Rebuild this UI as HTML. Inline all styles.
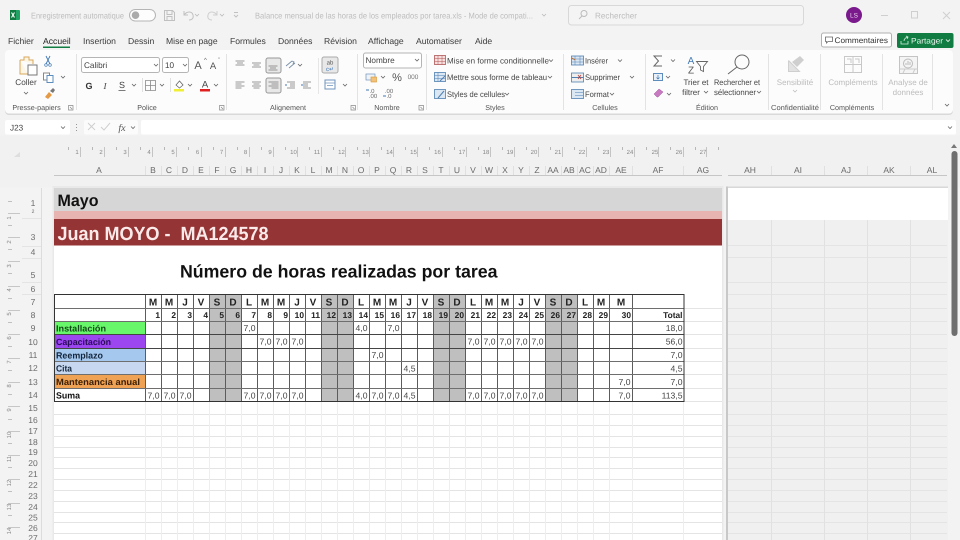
<!DOCTYPE html>
<html lang="fr"><head><meta charset="utf-8"><title>Excel</title>
<style>
html,body{margin:0;padding:0;width:960px;height:540px;overflow:hidden;background:#f3f3f3}
svg{display:block;font-family:"Liberation Sans",sans-serif;text-rendering:geometricPrecision;filter:blur(.3px)}
.t{font-size:8.3px;fill:#bdbdbd}
.m{font-size:8.6px;fill:#3a3a3a}
.r{font-size:8px;fill:#444}
.g{font-size:7.2px;fill:#555;text-anchor:middle}
.d{font-size:8px;fill:#bcbcbc;text-anchor:middle}
.ch{fill:none;stroke:#666;stroke-width:.8}
.rl{font-size:6px;fill:#888;text-anchor:middle}
.ch2{font-size:8.5px;fill:#6a6a6a;text-anchor:middle}
.rh{font-size:8.5px;fill:#6a6a6a;text-anchor:middle}
.h{font-size:10px;font-weight:bold;fill:#222;text-anchor:middle}
.n{font-size:8.4px;font-weight:bold;fill:#222;text-anchor:end}
.v{font-size:8.6px;fill:#444;text-anchor:end}
.l{font-size:9px;font-weight:bold}
</style></head><body>
<svg width="960" height="540" viewBox="0 0 960 540" xmlns="http://www.w3.org/2000/svg">
<defs><path id="c" class="ch" d="M-2-1 0 1 2-1"/></defs>
<rect width="960" height="540" fill="#f3f3f3"/>

<!-- title bar -->
<rect x="10" y="10" width="10" height="10" rx="1" fill="#21a366"/>
<rect x="10" y="10" width="6" height="10" fill="#107c41"/>
<path d="M11.5 12.5l3 5M14.5 12.5l-3 5" stroke="#fff" stroke-width="1.1"/>
<text class="t" x="31" y="18.5" textLength="93" lengthAdjust="spacingAndGlyphs">Enregistrement automatique</text>
<rect x="129.5" y="9.5" width="26" height="11.5" rx="5.7" fill="#fdfdfd" stroke="#b5b5b5"/>
<circle cx="135.5" cy="15.2" r="3.8" fill="#ababab"/>
<path d="M164.5 10.5h8l2 2v8h-10zM167 10.5v4h5v-4M167 20.5v-4h5v4" fill="none" stroke="#c0c0c0"/>
<path d="M184 11v4h4M184 15c3-4 8-4 9 0s-2 5-4 5" fill="none" stroke="#c0c0c0"/>
<use href="#c" x="197" y="15" opacity=".4"/>
<path d="M217 11v4h-4M217 15c-3-4-8-4-9 0s2 5 4 5" fill="none" stroke="#cfcfcf"/>
<use href="#c" x="222" y="15" opacity=".4"/>
<path d="M234 12.5h4M234 15l2 2 2-2" fill="none" stroke="#c0c0c0"/>
<text class="t" x="255" y="18.5" textLength="278" lengthAdjust="spacingAndGlyphs">Balance mensual de las horas de los empleados por tarea.xls  -  Mode de compati...</text>
<use href="#c" x="544" y="15" opacity=".4"/>
<rect x="568.5" y="5.5" width="235" height="19.5" rx="3" fill="#f4f4f4" stroke="#d8d8d8"/>
<circle cx="584" cy="13.5" r="3" fill="none" stroke="#bbb"/><path d="M582 16l-3 3" stroke="#bbb"/>
<text class="t" x="595" y="18.5" textLength="42" lengthAdjust="spacingAndGlyphs">Rechercher</text>
<circle cx="854" cy="15" r="8" fill="#7a1a8c"/>
<text x="854" y="17.5" font-size="6.5" fill="#e8d0ee" text-anchor="middle">LS</text>
<path d="M881 15.5h7" stroke="#cfcfcf"/>
<rect x="911.5" y="11.5" width="6" height="6.5" fill="none" stroke="#cfcfcf"/>
<path d="M943 12l7 7M950 12l-7 7" stroke="#cfcfcf"/>

<!-- tabs -->
<text class="m" x="8" y="44">Fichier</text>
<text class="m" x="43" y="44" style="fill:#222">Accueil</text>
<rect x="43" y="46.5" width="27" height="1.5" fill="#107c41"/>
<text class="m" x="83" y="44">Insertion</text>
<text class="m" x="128" y="44">Dessin</text>
<text class="m" x="166" y="44">Mise en page</text>
<text class="m" x="230" y="44">Formules</text>
<text class="m" x="278" y="44">Données</text>
<text class="m" x="324" y="44">Révision</text>
<text class="m" x="368" y="44">Affichage</text>
<text class="m" x="416" y="44">Automatiser</text>
<text class="m" x="475" y="44">Aide</text>
<rect x="821.5" y="33" width="70" height="14" rx="2" fill="#fff" stroke="#b0b0b0"/>
<path d="M825.5 37h7v4.5h-4.5l-1.5 1.5v-1.5h-1z" fill="none" stroke="#666" stroke-width=".8"/>
<text class="r" x="834.5" y="43" textLength="53.5" lengthAdjust="spacingAndGlyphs" style="fill:#333">Commentaires</text>
<rect x="897" y="33" width="56.5" height="15" rx="2" fill="#107c41"/>
<path d="M901 41v3h7v-3M904 41c0-2 2-4 4-4M906 36l2 1-1 2" fill="none" stroke="#d8efe2" stroke-width=".8"/>
<text class="r" x="911" y="43.5" textLength="32" lengthAdjust="spacingAndGlyphs" style="fill:#e6f5ec">Partager</text>
<path d="M946 39.5l2 2 2-2" fill="none" stroke="#fff" stroke-width=".8"/>

<!-- ribbon -->
<rect x="5" y="50.5" width="948" height="63.5" rx="4" fill="#d9d9d9" transform="translate(0 1)"/>
<rect x="5" y="50" width="948" height="63.5" rx="4" fill="#fcfcfc"/>
<path d="M76.5 54v56M226.5 54v56M357.5 54v56M426.5 54v56M563.5 54v56M645.5 54v56M768.5 54v56M820.5 54v56M882.5 54v56M932.5 54v56" stroke="#e3e3e3"/>

<!-- clipboard -->
<path d="M20 60h4v-3h5v3h4v4M20 60v14h8" fill="#fdf6e6" stroke="#d9a85b"/>
<rect x="28" y="65" width="9" height="10" fill="#fff" stroke="#777"/>
<text class="r" x="26" y="85" text-anchor="middle" style="font-size:8.2px">Coller</text>
<use href="#c" x="26" y="93"/>
<path d="M46 56l4 8M50 56l-4 8" stroke="#3f78b5" stroke-width=".9"/>
<circle cx="46" cy="65" r="1.3" fill="none" stroke="#3f78b5" stroke-width=".7"/><circle cx="50" cy="65" r="1.3" fill="none" stroke="#3f78b5" stroke-width=".7"/>
<rect x="43.5" y="73" width="6" height="7" fill="#fff" stroke="#888"/><rect x="47" y="75.5" width="6" height="7" fill="#fff" stroke="#5d8dbd"/>
<use href="#c" x="63" y="77"/>
<path d="M45 97l4-5 3 3-4 4z" fill="#e59a45"/><path d="M50 91l3-3 2 2-2 3z" fill="#777"/>
<text class="g" x="36.5" y="110">Presse-papiers</text>
<path d="M68.5 105.5h4.500v4.500h-4.500zM70 107l2 2" fill="none" stroke="#888" stroke-width=".7"/>

<!-- font -->
<rect x="81.5" y="57.5" width="78" height="15" rx="2" fill="#fff" stroke="#b5b5b5"/>
<text class="r" x="84" y="68" style="font-size:8.2px">Calibri</text>
<use href="#c" x="156" y="65"/>
<rect x="162.5" y="57.5" width="26" height="15" rx="2" fill="#fff" stroke="#b5b5b5"/>
<text class="r" x="165" y="68" style="font-size:8.2px">10</text>
<use href="#c" x="185" y="65"/>
<text x="198" y="69" font-size="11" fill="#555" text-anchor="middle">A</text><text x="204" y="62" font-size="6" fill="#555">^</text>
<text x="213" y="69" font-size="9.5" fill="#555" text-anchor="middle">A</text><text x="218" y="62" font-size="6" fill="#555">ˇ</text>
<text x="89" y="89" font-size="9" font-weight="bold" fill="#333" text-anchor="middle">G</text>
<text x="105" y="89" font-size="9" font-style="italic" font-family="Liberation Serif" fill="#444" text-anchor="middle">I</text>
<text x="122" y="88" font-size="9" fill="#444" text-anchor="middle">S</text><path d="M118.5 90.5h7" stroke="#444" stroke-width=".7"/>
<use href="#c" x="134" y="85"/>
<path d="M142.5 78v14M170.5 78v14" stroke="#e0e0e0"/>
<path d="M145.5 80.5h10v10h-10zM150.5 80.5v10M145.5 85.5h10" fill="none" stroke="#888" stroke-width=".8"/>
<use href="#c" x="162" y="85"/>
<path d="M176 85l3.500-4 3.500 4-3.500 3z" fill="#fff" stroke="#666" stroke-width=".8"/><rect x="174" y="89" width="10" height="2.5" fill="#f1ee36"/>
<use href="#c" x="190" y="85"/>
<text x="205" y="87.5" font-size="9.5" fill="#444" text-anchor="middle">A</text><rect x="200" y="89" width="10" height="2.5" fill="#e02020"/>
<use href="#c" x="216" y="85"/>
<text class="g" x="147" y="110">Police</text>
<path d="M219.5 105.5h4.500v4.500h-4.500zM221 107l2 2" fill="none" stroke="#888" stroke-width=".7"/>

<!-- alignment -->
<rect x="266" y="58" width="15" height="15" rx="2" fill="#e8e8e8" stroke="#999"/>
<rect x="266" y="78" width="15" height="15" rx="2" fill="#e8e8e8" stroke="#999"/>
<path d="M235.5 61h9M237 63h6M235.5 65h9M252 63h9M253.5 65h6M252 67h9M268.5 66h9M270 68h6M268.5 70h9" stroke="#777" stroke-width=".8"/>
<path d="M286 66l6-5M289 68l6-5M292 61l2 1-1 2" fill="none" stroke="#7a8ea8" stroke-width=".9"/>
<use href="#c" x="300" y="65"/>
<path d="M235.5 82h9M235.5 84h6M235.5 86h9M235.5 88h6M252 82h9M253.5 84h6M252 86h9M253.5 88h6M268.5 82h10M271.5 84h7M268.5 86h10M271.5 88h7M287 82h8M290 84h5M290 86h5M287 88h8M303 82h8M303 84h5M303 86h5M303 88h8" stroke="#777" stroke-width=".8"/>
<path d="M285 85l2 0M301 85l2 0" stroke="#3f78b5"/>
<path d="M318.5 58v36" stroke="#e6e6e6"/>
<rect x="322" y="57" width="16" height="16" rx="2" fill="#e8e8e8" stroke="#aaa"/>
<text x="330" y="64.5" font-size="6" fill="#555" text-anchor="middle">ab</text><text x="330" y="71" font-size="6" fill="#3f78b5" text-anchor="middle">c↵</text>
<rect x="325" y="80" width="10" height="9" fill="#fff" stroke="#6f93bd"/><path d="M325 83h10M327 85.5h6" stroke="#6f93bd" stroke-width=".7"/>
<use href="#c" x="345" y="85"/>
<text class="g" x="288" y="110">Alignement</text>
<path d="M351 105.5h4.500v4.500h-4.500zM352.5 107l2 2" fill="none" stroke="#888" stroke-width=".7"/>

<!-- number -->
<rect x="363.5" y="53" width="58" height="15" rx="2" fill="#fff" stroke="#b5b5b5"/>
<text class="r" x="365.5" y="63" style="font-size:8.2px">Nombre</text>
<use href="#c" x="417" y="60"/>
<rect x="366" y="74" width="9" height="6" fill="#eef3f8" stroke="#6f93bd" stroke-width=".7"/><rect x="371" y="77" width="5.5" height="5" fill="#f3c27a" stroke="#d9932f" stroke-width=".6"/>
<use href="#c" x="383" y="77"/>
<text x="397" y="81" font-size="11" fill="#555" text-anchor="middle">%</text>
<text x="413" y="79" font-size="6.5" fill="#777" text-anchor="middle">000</text>
<text x="372" y="93" font-size="6" fill="#666" text-anchor="middle">.0</text><text x="373" y="98" font-size="6" fill="#666" text-anchor="middle">.00</text><path d="M366 90h3" stroke="#3f78b5"/>
<text x="389" y="93" font-size="6" fill="#666" text-anchor="middle">.00</text><text x="389" y="98" font-size="6" fill="#666" text-anchor="middle">.0</text><path d="M383 96h3" stroke="#3f78b5"/>
<text class="g" x="387" y="110">Nombre</text>
<path d="M419 105.5h4.500v4.500h-4.500zM420.5 107l2 2" fill="none" stroke="#888" stroke-width=".7"/>

<!-- styles -->
<rect x="434.5" y="55.5" width="11" height="9" fill="#f7dede" stroke="#b05555" stroke-width=".8"/><path d="M434.5 58.5h11M434.5 61.5h11M438 55.5v9M442 55.5v9" stroke="#b05555" stroke-width=".5"/>
<rect x="434.5" y="72.5" width="11" height="9" fill="#dbe7f3" stroke="#4f7fb0" stroke-width=".8"/><path d="M434.5 75.5h11M434.5 78.5h11M438 72.5v9" stroke="#4f7fb0" stroke-width=".5"/><path d="M440 81l5-5" stroke="#4f7fb0"/>
<rect x="434.5" y="89.5" width="11" height="9" fill="#dbe7f3" stroke="#4f7fb0" stroke-width=".8"/><path d="M438 98l6-7" stroke="#4f7fb0"/>
<text class="r" x="447" y="63.5" textLength="102" lengthAdjust="spacingAndGlyphs">Mise en forme conditionnelle</text><use href="#c" x="551" y="60.5"/>
<text class="r" x="447" y="80" textLength="100" lengthAdjust="spacingAndGlyphs">Mettre sous forme de tableau</text><use href="#c" x="550" y="77"/>
<text class="r" x="447" y="97" textLength="58" lengthAdjust="spacingAndGlyphs">Styles de cellules</text><use href="#c" x="507" y="94"/>
<text class="g" x="495" y="110">Styles</text>

<!-- cells -->
<rect x="571.5" y="56" width="12" height="9" fill="#dbe7f3" stroke="#4f7fb0" stroke-width=".8"/><path d="M571.5 59h12M571.5 62h12M575 56v9M580 56v9" stroke="#4f7fb0" stroke-width=".5"/><path d="M572 58l3 2" stroke="#c06a2a"/>
<rect x="571.5" y="73" width="12" height="9" fill="#eee" stroke="#4f7fb0" stroke-width=".8"/><path d="M571.5 77.5h12" stroke="#4f7fb0"/><path d="M578 75l3 4M581 75l-3 4" stroke="#c04040" stroke-width=".8"/>
<rect x="571.5" y="89.5" width="12" height="9" fill="#dbe7f3" stroke="#4f7fb0" stroke-width=".8"/><path d="M575 92.5h8M575 95.5h8" stroke="#4f7fb0" stroke-width=".6"/>
<text class="r" x="585" y="63.5" textLength="23" lengthAdjust="spacingAndGlyphs">Insérer</text><use href="#c" x="620" y="60.5"/>
<text class="r" x="585" y="80" textLength="35" lengthAdjust="spacingAndGlyphs">Supprimer</text><use href="#c" x="632" y="77"/>
<text class="r" x="585" y="97" textLength="24" lengthAdjust="spacingAndGlyphs">Format</text><use href="#c" x="612" y="94"/>
<text class="g" x="605" y="110">Cellules</text>

<!-- edit -->
<path d="M662 56h-8l4.500 5-4.500 5h8" fill="none" stroke="#666"/>
<use href="#c" x="673" y="60.5"/>
<rect x="653.5" y="73.5" width="9" height="7" fill="#e9f0f7" stroke="#5d8dbd"/><path d="M658 75v4M656.5 77.5l1.500 1.500 1.500-1.500" fill="none" stroke="#3f78b5" stroke-width=".7"/>
<use href="#c" x="668" y="77"/>
<path d="M654 94l5-5 4 3-5 5h-1z" fill="#c77ac0" stroke="#a355a0" stroke-width=".5"/>
<use href="#c" x="669" y="94"/>
<text x="691" y="64" font-size="10" fill="#3f78b5" text-anchor="middle">A</text><text x="691" y="73.5" font-size="10" fill="#555" text-anchor="middle">Z</text>
<path d="M696.5 61.5h11l-4 5v5l-3-1.500v-3.500z" fill="none" stroke="#666" stroke-width=".9"/>
<text class="r" x="696" y="85" text-anchor="middle">Trier et</text>
<text class="r" x="691" y="95" text-anchor="middle">filtrer</text><use href="#c" x="706" y="92"/>
<circle cx="742" cy="62" r="7" fill="none" stroke="#666"/><path d="M737 67l-9 7" stroke="#666"/>
<text class="r" x="737" y="85" text-anchor="middle" textLength="46" lengthAdjust="spacingAndGlyphs">Rechercher et</text>
<text class="r" x="735" y="95" text-anchor="middle" textLength="42" lengthAdjust="spacingAndGlyphs">sélectionner</text><use href="#c" x="759" y="92"/>
<text class="g" x="707" y="110">Édition</text>

<!-- confidentiality, add-ins, analysis -->
<path d="M788.5 60.5v11h11l-11-11" fill="#e2e2e2" stroke="#cfcfcf"/>
<path d="M792 62l8-6 4 4-7 7z" fill="#cfcfcf"/>
<text class="d" x="795" y="85">Sensibilité</text>
<use href="#c" x="795" y="91" opacity=".4"/>
<text class="g" x="795" y="110" textLength="48" lengthAdjust="spacingAndGlyphs">Confidentialité</text>
<path d="M844.5 56.5h17v16h-17zM853 56.5v16M844.5 64.5h17M847 59h4v4M855 59h4v4" fill="none" stroke="#c8c8c8"/>
<text class="d" x="853" y="85">Compléments</text>
<text class="g" x="852" y="110">Compléments</text>
<rect x="899.5" y="56.5" width="18" height="17" fill="#f4f4f4" stroke="#c4c4c4"/><circle cx="908" cy="63.5" r="4.5" fill="none" stroke="#bbb"/><path d="M906 65v-2M908 65v-4M910 65v-3" stroke="#bbb"/><path d="M899.5 69h18M903 73l2-4M913 73l2-4" stroke="#ccc"/>
<text class="d" x="908" y="85">Analyse de</text>
<text class="d" x="908" y="95">données</text>
<use href="#c" x="947" y="105"/>

<!-- formula bar -->
<rect x="5" y="120" width="65" height="14.5" rx="2" fill="#fff"/>
<text class="r" x="10" y="130.5" style="font-size:8.2px">J23</text>
<use href="#c" x="63" y="127.5"/>
<path d="M76.5 124v.8M76.5 127v.8M76.5 130v.8" stroke="#777"/>
<rect x="84" y="120" width="54" height="14.5" rx="2" fill="#fbfbfb"/>
<path d="M88 123l7 7M95 123l-7 7M101 127l3 3 6-7" fill="none" stroke="#cfcfcf"/>
<text x="122" y="131" font-size="10" font-style="italic" font-family="Liberation Serif" fill="#555" text-anchor="middle">fx</text>
<use href="#c" x="133" y="127.5"/>
<rect x="141" y="120" width="815" height="14.5" rx="2" fill="#fff"/>
<use href="#c" x="950" y="127.5"/>

<!-- ruler -->
<rect x="0" y="135.5" width="960" height="52" fill="#f1f1f1"/>
<path d="M14 157l6-5v5z" fill="#dedede"/>
<text class="rl" x="77" y="154">1</text><text class="rl" x="101" y="154">2</text><text class="rl" x="125" y="154">3</text><text class="rl" x="149" y="154">4</text><text class="rl" x="173" y="154">5</text><text class="rl" x="197.5" y="154">6</text><text class="rl" x="221.5" y="154">7</text><text class="rl" x="245.5" y="154">8</text><text class="rl" x="270" y="154">9</text><text class="rl" x="293.5" y="154">10</text><text class="rl" x="317" y="154">11</text><text class="rl" x="341.5" y="154">12</text><text class="rl" x="365.5" y="154">13</text><text class="rl" x="389.5" y="154">14</text><text class="rl" x="413.5" y="154">15</text><text class="rl" x="437.5" y="154">16</text><text class="rl" x="462" y="154">17</text><text class="rl" x="486" y="154">18</text><text class="rl" x="510" y="154">19</text><text class="rl" x="534" y="154">20</text><text class="rl" x="558" y="154">21</text><text class="rl" x="582" y="154">22</text><text class="rl" x="606" y="154">23</text><text class="rl" x="630" y="154">24</text><text class="rl" x="655" y="154">25</text><text class="rl" x="679" y="154">26</text><text class="rl" x="703" y="154">27</text>
<path d="M80.5 147v10M104.5 147v10M128.5 147v10M152.5 147v10M176.5 147v10M201.5 147v10M225.5 147v10M249.5 147v10M273.5 147v10M297.5 147v10M321.5 147v10M345.5 147v10M369.5 147v10M393.5 147v10M417.5 147v10M442.5 147v10M466.5 147v10M490.5 147v10M514.5 147v10M538.5 147v10M562.5 147v10M586.5 147v10M610.5 147v10M634.5 147v10M658.5 147v10M683.5 147v10M706.5 147v10" stroke="#b8b8b8" stroke-width=".8"/>
<path d="M68.5 147v3M92.5 147v3M116.5 147v3M140.5 147v3M164.5 147v3M188.5 147v3M213.5 147v3M237.5 147v3M261.5 147v3M285.5 147v3M309.5 147v3M333.5 147v3M357.5 147v3M381.5 147v3M405.5 147v3M429.5 147v3M454.5 147v3M478.5 147v3M502.5 147v3M526.5 147v3M550.5 147v3M574.5 147v3M598.5 147v3M622.5 147v3M646.5 147v3M670.5 147v3M695.5 147v3M718.5 147v3" stroke="#a8a8a8" stroke-width=".8"/>

<!-- column headers -->
<path d="M54 175.5h668M728 175.5h219" stroke="#c6c6c6"/>
<path d="M145.500 166v9M161.500 166v9M177.500 166v9M193.500 166v9M209.500 166v9M225.500 166v9M241.500 166v9M257.500 166v9M273.500 166v9M289.500 166v9M305.500 166v9M321.500 166v9M337.500 166v9M353.500 166v9M369.500 166v9M385.500 166v9M401.500 166v9M417.500 166v9M433.500 166v9M449.500 166v9M465.500 166v9M481.500 166v9M497.500 166v9M513.500 166v9M529.500 166v9M545.500 166v9M561.500 166v9M577.500 166v9M593.500 166v9M609.500 166v9M632.500 166v9M683.500 166v9M771.500 166v9M824.500 166v9M867.500 166v9M910.500 166v9" stroke="#e0e0e0"/>
<text class="ch2" x="99" y="173">A</text><text class="ch2" x="153" y="173">B</text><text class="ch2" x="169" y="173">C</text><text class="ch2" x="185" y="173">D</text><text class="ch2" x="201" y="173">E</text><text class="ch2" x="217" y="173">F</text><text class="ch2" x="233" y="173">G</text><text class="ch2" x="249" y="173">H</text><text class="ch2" x="265" y="173">I</text><text class="ch2" x="281" y="173">J</text><text class="ch2" x="297" y="173">K</text><text class="ch2" x="313" y="173">L</text><text class="ch2" x="329" y="173">M</text><text class="ch2" x="345" y="173">N</text><text class="ch2" x="361" y="173">O</text><text class="ch2" x="377" y="173">P</text><text class="ch2" x="393" y="173">Q</text><text class="ch2" x="409" y="173">R</text><text class="ch2" x="425" y="173">S</text><text class="ch2" x="441" y="173">T</text><text class="ch2" x="457" y="173">U</text><text class="ch2" x="473" y="173">V</text><text class="ch2" x="489" y="173">W</text><text class="ch2" x="505" y="173">X</text><text class="ch2" x="521" y="173">Y</text><text class="ch2" x="537" y="173">Z</text><text class="ch2" x="553" y="173">AA</text><text class="ch2" x="569" y="173">AB</text><text class="ch2" x="585" y="173">AC</text><text class="ch2" x="601" y="173">AD</text><text class="ch2" x="621" y="173">AE</text><text class="ch2" x="658" y="173">AF</text><text class="ch2" x="703" y="173">AG</text><text class="ch2" x="750" y="173">AH</text><text class="ch2" x="798" y="173">AI</text><text class="ch2" x="846" y="173">AJ</text><text class="ch2" x="889" y="173">AK</text><text class="ch2" x="932" y="173">AL</text>

<!-- vertical ruler and row headers -->
<path d="M41.5 188v352" stroke="#dcdcdc"/>
<path d="M8 213.5h12M8 237.5h12M8 261.5h12M8 286.5h12M8 310.5h12M8 334.5h12M8 358.5h12M8 382.5h12M8 406.5h12M8 431.5h12M8 455.5h12M8 479.5h12M8 503.5h12M8 527.5h12" stroke="#b8b8b8" stroke-width=".8"/>
<path d="M8 201.5h4M8 225.5h4M8 249.5h4M8 273.5h4M8 298.5h4M8 322.5h4M8 346.5h4M8 370.5h4M8 394.5h4M8 419.5h4M8 443.5h4M8 467.5h4M8 491.5h4M8 515.5h4" stroke="#b0b0b0" stroke-width=".8"/>
<text class="rl" transform="translate(11 218) rotate(-90)">1</text><text class="rl" transform="translate(11 242) rotate(-90)">2</text><text class="rl" transform="translate(11 266) rotate(-90)">3</text><text class="rl" transform="translate(11 290) rotate(-90)">4</text><text class="rl" transform="translate(11 314) rotate(-90)">5</text><text class="rl" transform="translate(11 338) rotate(-90)">6</text><text class="rl" transform="translate(11 362) rotate(-90)">7</text><text class="rl" transform="translate(11 386) rotate(-90)">8</text><text class="rl" transform="translate(11 410) rotate(-90)">9</text><text class="rl" transform="translate(11 435) rotate(-90)">10</text><text class="rl" transform="translate(11 459) rotate(-90)">11</text><text class="rl" transform="translate(11 483) rotate(-90)">12</text><text class="rl" transform="translate(11 507) rotate(-90)">13</text><text class="rl" transform="translate(11 531) rotate(-90)">14</text>
<path d="M22 218.5h19M22 246.5h19M22 258.5h19M22 282.5h19M22 294.5h19" stroke="#e4e4e4"/>
<text class="rh" x="33" y="206">1</text><text class="rh" x="33" y="213" style="font-size:5px">2</text><text class="rh" x="33" y="240">3</text><text class="rh" x="33" y="255">4</text><text class="rh" x="33" y="278">5</text><text class="rh" x="33" y="292">6</text><text class="rh" x="33" y="305">7</text><text class="rh" x="33" y="318">8</text><text class="rh" x="33" y="331">9</text><text class="rh" x="33" y="345">10</text><text class="rh" x="33" y="358">11</text><text class="rh" x="33" y="371">12</text><text class="rh" x="33" y="385">13</text><text class="rh" x="33" y="398">14</text><text class="rh" x="33" y="411">15</text><text class="rh" x="33" y="423">16</text><text class="rh" x="33" y="434">17</text><text class="rh" x="33" y="445">18</text><text class="rh" x="33" y="455">19</text><text class="rh" x="33" y="466">20</text><text class="rh" x="33" y="477">21</text><text class="rh" x="33" y="488">22</text><text class="rh" x="33" y="499">23</text><text class="rh" x="33" y="510">24</text><text class="rh" x="33" y="520.5">25</text><text class="rh" x="33" y="531">26</text><text class="rh" x="33" y="541">27</text>

<!-- page 1 -->
<rect x="52.5" y="186" width="671" height="354" fill="#e9e9e9"/>
<rect x="54" y="188" width="668" height="352" fill="#fff"/>
<rect x="54" y="188" width="668" height="23" fill="#d6d6d6"/>
<rect x="54" y="211" width="668" height="8" fill="#e8b4b2"/>
<rect x="54" y="219" width="668" height="26.5" fill="#943434"/>
<text x="57.5" y="206" font-size="16.5" font-weight="bold" fill="#111" textLength="41" lengthAdjust="spacingAndGlyphs">Mayo</text>
<text x="57.5" y="240" font-size="19" font-weight="bold" fill="#fbeaea" textLength="211" lengthAdjust="spacingAndGlyphs" xml:space="preserve">Juan MOYO -  MA124578</text>
<text x="180" y="277.5" font-size="18" font-weight="bold" fill="#111" textLength="317.5" lengthAdjust="spacingAndGlyphs">Número de horas realizadas por tarea</text>

<!-- gridlines below table -->
<path d="M54 414.5h668M54 425.5h668M54 436.5h668M54 447.5h668M54 457.5h668M54 468.5h668M54 479.5h668M54 490.5h668M54 501.5h668M54 512.5h668M54 522.5h668M54 533.5h668M684 308.5h38M684 321.5h38M684 334.5h38M684 348.5h38M684 361.5h38M684 374.5h38M684 388.5h38M684 401.5h38" stroke="#e4e4e4"/>
<path d="M145.500 402v138M161.500 402v138M177.500 402v138M193.500 402v138M209.500 402v138M225.500 402v138M241.500 402v138M257.500 402v138M273.500 402v138M289.500 402v138M305.500 402v138M321.500 402v138M337.500 402v138M353.500 402v138M369.500 402v138M385.500 402v138M401.500 402v138M417.500 402v138M433.500 402v138M449.500 402v138M465.500 402v138M481.500 402v138M497.500 402v138M513.500 402v138M529.500 402v138M545.500 402v138M561.500 402v138M577.500 402v138M593.500 402v138M609.500 402v138M632.500 402v138M683.500 402v138" stroke="#eeeeee"/>

<!-- table fills -->
<rect x="54" y="321" width="91" height="13.5" fill="#68f76a"/>
<rect x="54" y="334.5" width="91" height="13.5" fill="#9c46f0"/>
<rect x="54" y="348" width="91" height="13.5" fill="#a5c8ef"/>
<rect x="54" y="361.5" width="91" height="13" fill="#c6d7ef"/>
<rect x="54" y="374.5" width="91" height="13.5" fill="#f0a254"/>
<path d="M209 294h32v108h-32zM321 294h32v108h-32zM433 294h32v108h-32zM545 294h32v108h-32z" fill="#bfbfbf"/>

<!-- table lines -->
<path d="M145.500 294v108M161.500 294v108M177.500 294v108M193.500 294v108M209.500 294v108M225.500 294v108M241.500 294v108M257.500 294v108M273.500 294v108M289.500 294v108M305.500 294v108M321.500 294v108M337.500 294v108M353.500 294v108M369.500 294v108M385.500 294v108M401.500 294v108M417.500 294v108M433.500 294v108M449.500 294v108M465.500 294v108M481.500 294v108M497.500 294v108M513.500 294v108M529.500 294v108M545.500 294v108M561.500 294v108M577.500 294v108M593.500 294v108M609.500 294v108M632.500 294v108" stroke="#5c5c5c" fill="none"/>
<path d="M54 308.5h630M54 321.5h630M54 361.5h630M54 374.5h630M54 388.5h630" stroke="#6e6e6e"/>
<path d="M54 334.5h630M54 348.5h630" stroke="#444"/>
<rect x="54.5" y="294.5" width="629.5" height="107" fill="none" stroke="#333"/>

<!-- labels -->
<text class="l" x="56" y="331.5" fill="#124a1a" textLength="50" lengthAdjust="spacingAndGlyphs">Installación</text>
<text class="l" x="56" y="345" fill="#2c0c5c" textLength="55" lengthAdjust="spacingAndGlyphs">Capacitación</text>
<text class="l" x="56" y="358.5" fill="#14263c" textLength="47" lengthAdjust="spacingAndGlyphs">Reemplazo</text>
<text class="l" x="56" y="371.5" fill="#14263c" textLength="16" lengthAdjust="spacingAndGlyphs">Cita</text>
<text class="l" x="56" y="385" fill="#3a2008" textLength="84" lengthAdjust="spacingAndGlyphs">Mantenancia anual</text>
<text class="l" x="56" y="398.5" fill="#111" textLength="24" lengthAdjust="spacingAndGlyphs">Suma</text>

<!-- day letters -->
<text class="h" x="153" y="305.5">M</text><text class="h" x="169" y="305.5">M</text><text class="h" x="185" y="305.5">J</text><text class="h" x="201" y="305.5">V</text><text class="h" x="217" y="305.5">S</text><text class="h" x="233" y="305.5">D</text><text class="h" x="249" y="305.5">L</text><text class="h" x="265" y="305.5">M</text><text class="h" x="281" y="305.5">M</text><text class="h" x="297" y="305.5">J</text><text class="h" x="313" y="305.5">V</text><text class="h" x="329" y="305.5">S</text><text class="h" x="345" y="305.5">D</text><text class="h" x="361" y="305.5">L</text><text class="h" x="377" y="305.5">M</text><text class="h" x="393" y="305.5">M</text><text class="h" x="409" y="305.5">J</text><text class="h" x="425" y="305.5">V</text><text class="h" x="441" y="305.5">S</text><text class="h" x="457" y="305.5">D</text><text class="h" x="473" y="305.5">L</text><text class="h" x="489" y="305.5">M</text><text class="h" x="505" y="305.5">M</text><text class="h" x="521" y="305.5">J</text><text class="h" x="537" y="305.5">V</text><text class="h" x="553" y="305.5">S</text><text class="h" x="569" y="305.5">D</text><text class="h" x="585" y="305.5">L</text><text class="h" x="601" y="305.5">M</text><text class="h" x="621" y="305.5">M</text>

<!-- day numbers -->
<text class="n" x="160" y="318">1</text><text class="n" x="176" y="318">2</text><text class="n" x="192" y="318">3</text><text class="n" x="208" y="318">4</text><text class="n" x="224" y="318">5</text><text class="n" x="240" y="318">6</text><text class="n" x="256" y="318">7</text><text class="n" x="272" y="318">8</text><text class="n" x="288" y="318">9</text><text class="n" x="304" y="318">10</text><text class="n" x="320" y="318">11</text><text class="n" x="336" y="318">12</text><text class="n" x="352" y="318">13</text><text class="n" x="368" y="318">14</text><text class="n" x="384" y="318">15</text><text class="n" x="400" y="318">16</text><text class="n" x="416" y="318">17</text><text class="n" x="432" y="318">18</text><text class="n" x="448" y="318">19</text><text class="n" x="464" y="318">20</text><text class="n" x="480" y="318">21</text><text class="n" x="496" y="318">22</text><text class="n" x="512" y="318">23</text><text class="n" x="528" y="318">24</text><text class="n" x="544" y="318">25</text><text class="n" x="560" y="318">26</text><text class="n" x="576" y="318">27</text><text class="n" x="592" y="318">28</text><text class="n" x="608" y="318">29</text><text class="n" x="631" y="318">30</text><text class="n" x="682.5" y="318">Total</text>

<!-- values -->
<text class="v" x="255.5" y="331">7,0</text><text class="v" x="367.5" y="331">4,0</text><text class="v" x="399.5" y="331">7,0</text><text class="v" x="682.5" y="331">18,0</text>
<text class="v" x="271.5" y="344.5">7,0</text><text class="v" x="287.5" y="344.5">7,0</text><text class="v" x="303.5" y="344.5">7,0</text><text class="v" x="479.5" y="344.5">7,0</text><text class="v" x="495.5" y="344.5">7,0</text><text class="v" x="511.5" y="344.5">7,0</text><text class="v" x="527.5" y="344.5">7,0</text><text class="v" x="543.5" y="344.5">7,0</text><text class="v" x="682.5" y="344.5">56,0</text>
<text class="v" x="383.5" y="358">7,0</text><text class="v" x="682.5" y="358">7,0</text>
<text class="v" x="415.5" y="371.5">4,5</text><text class="v" x="682.5" y="371.5">4,5</text>
<text class="v" x="630.5" y="385">7,0</text><text class="v" x="682.5" y="385">7,0</text>
<text class="v" x="159.5" y="398.5">7,0</text><text class="v" x="175.5" y="398.5">7,0</text><text class="v" x="191.5" y="398.5">7,0</text><text class="v" x="255.5" y="398.5">7,0</text><text class="v" x="271.5" y="398.5">7,0</text><text class="v" x="287.5" y="398.5">7,0</text><text class="v" x="303.5" y="398.5">7,0</text><text class="v" x="367.5" y="398.5">4,0</text><text class="v" x="383.5" y="398.5">7,0</text><text class="v" x="399.5" y="398.5">7,0</text><text class="v" x="415.5" y="398.5">4,5</text><text class="v" x="479.5" y="398.5">7,0</text><text class="v" x="495.5" y="398.5">7,0</text><text class="v" x="511.5" y="398.5">7,0</text><text class="v" x="527.5" y="398.5">7,0</text><text class="v" x="543.5" y="398.5">7,0</text><text class="v" x="630.5" y="398.5">7,0</text><text class="v" x="682.5" y="398.5">113,5</text>

<!-- page 2 -->
<rect x="726" y="186.5" width="2" height="353.5" fill="#c8c8c8"/>
<rect x="728" y="186.5" width="220" height="1.5" fill="#d8d8d8"/>
<rect x="728" y="188" width="220" height="32" fill="#fff"/>
<rect x="728" y="220" width="220" height="320" fill="#f0f0f0"/>
<path d="M728 245.5h219M728 257.5h219M728 282.5h219M728 294.5h219M728 308.5h219M728 321.5h219M728 334.5h219M728 348.5h219M728 361.5h219M728 374.5h219M728 388.5h219M728 401.5h219M728 414.5h219M728 425.5h219M728 436.5h219M728 447.5h219M728 457.5h219M728 468.5h219M728 479.5h219M728 490.5h219M728 501.5h219M728 512.5h219M728 522.5h219M728 533.5h219" stroke="#e4e4e4"/>
<path d="M771.5 220v320M824.5 220v320M867.5 220v320M910.5 220v320" stroke="#e1e1e1"/>

<!-- scrollbar -->
<path d="M951 148l3-4 3 4z" fill="#777"/>
<rect x="951.5" y="151" width="6" height="185" rx="3" fill="#6e6e6e"/>
</svg>
</body></html>
